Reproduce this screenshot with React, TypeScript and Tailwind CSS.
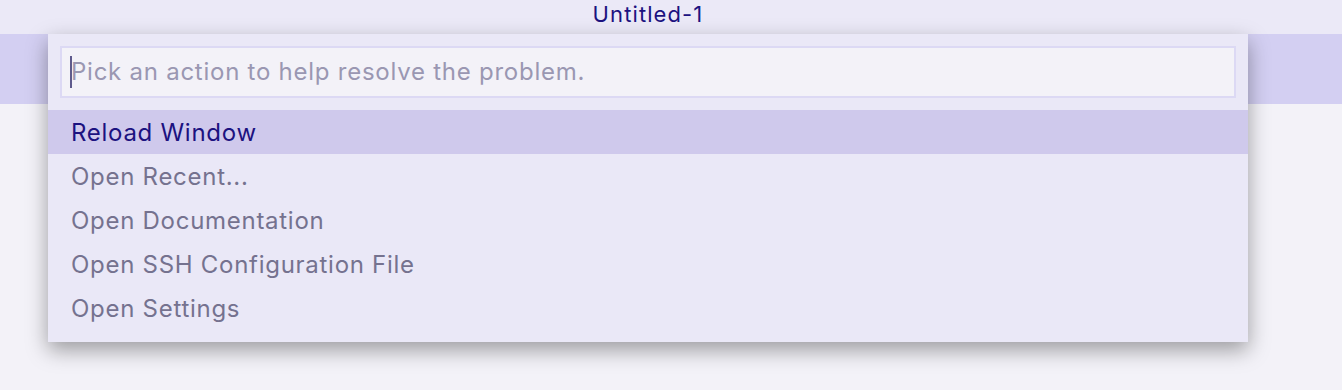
import React from "react";

const items = [
  "Reload Window",
  "Open Recent...",
  "Open Documentation",
  "Open SSH Configuration File",
  "Open Settings",
];

export default function App() {
  return (
    <div
      className="relative w-[1342px] h-[390px] overflow-hidden bg-[#f3f2f8]"
      style={{ fontFamily: "Inter, 'Noto Sans', sans-serif" }}
    >
      <div className="h-[34px] bg-[#ebe9f7] flex items-start justify-center pr-[46px]">
        <span className="text-[22px] tracking-[1.1px] text-[#1c1280] leading-none mt-[3px]">
          Untitled-1
        </span>
      </div>
      <div className="h-[70px] bg-[#d3cff2]" />
      <div className="absolute left-[48px] top-[34px] w-[1200px] bg-[#eae8f7] shadow-[0_8px_20px_rgba(0,0,0,0.36)] pt-[12px] pb-[12px]">
        <div className="mx-[12px] h-[52px] border-2 border-[#dcd9f4] bg-[#f3f2f8] flex items-center pl-[8px]">
          <div className="w-[2px] h-[32px] bg-[#5e5a8c] mr-[-1px]" />
          <span className="text-[24px] tracking-[0.75px] text-[#9a97b2] leading-none">
            Pick an action to help resolve the problem.
          </span>
        </div>
        <div className="mt-[12px]">
          {items.map((t, i) => (
            <div
              key={t}
              className={
                i === 0
                  ? "h-[44px] flex items-center pl-[23px] pt-[2px] text-[24px] tracking-[0.72px] bg-[#cfc9ec] text-[#1c1280]"
                  : "h-[44px] flex items-center pl-[23px] pt-[2px] text-[24px] tracking-[0.72px] text-[#75728f]"
              }
            >
              {t}
            </div>
          ))}
        </div>
      </div>
    </div>
  );
}
